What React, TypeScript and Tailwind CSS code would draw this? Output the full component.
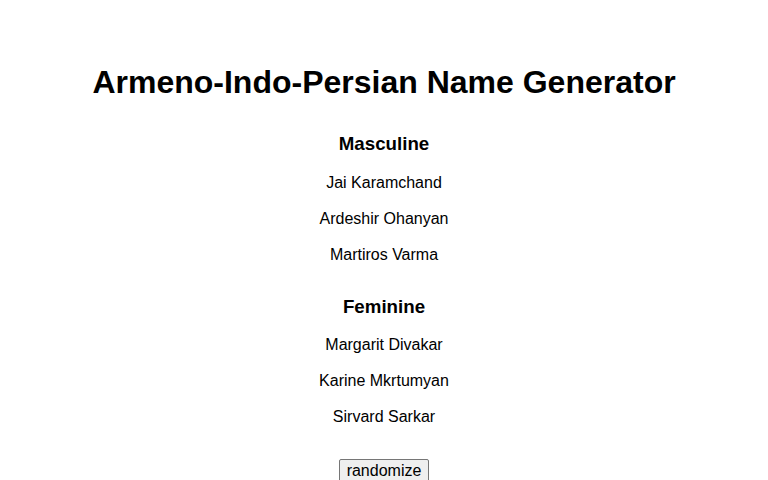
const masculine = ["Jai Karamchand", "Ardeshir Ohanyan", "Martiros Varma"];
const feminine = ["Margarit Divakar", "Karine Mkrtumyan", "Sirvard Sarkar"];

function NameList({ names, className }: { names: string[]; className: string }) {
  return (
    <ul className={`flex flex-col items-center gap-[16px] ${className}`}>
      {names.map((name) => (
        <li key={name} className="text-[16px] leading-[20px]">
          {name}
        </li>
      ))}
    </ul>
  );
}

export default function App() {
  return (
    <div
      className="flex min-h-[480px] flex-col items-center bg-white pt-[64px] text-center text-black"
      style={{ fontFamily: '"Liberation Sans", Arial, sans-serif' }}
    >
      <h1 className="text-[32px] font-bold leading-[36px]">Armeno-Indo-Persian Name Generator</h1>

      <h3 className="mt-[33px] text-[18.72px] font-bold leading-[22px]">Masculine</h3>
      <NameList names={masculine} className="mt-[18px]" />

      <h3 className="mt-[31px] text-[18.72px] font-bold leading-[22px]">Feminine</h3>
      <NameList names={feminine} className="mt-[17px]" />

      <button className="mt-[32px] rounded-[2px] border border-[#767676] bg-[#efefef] px-[7px] py-[1px] text-[16px] leading-[20px] text-black">
        randomize
      </button>
    </div>
  );
}
